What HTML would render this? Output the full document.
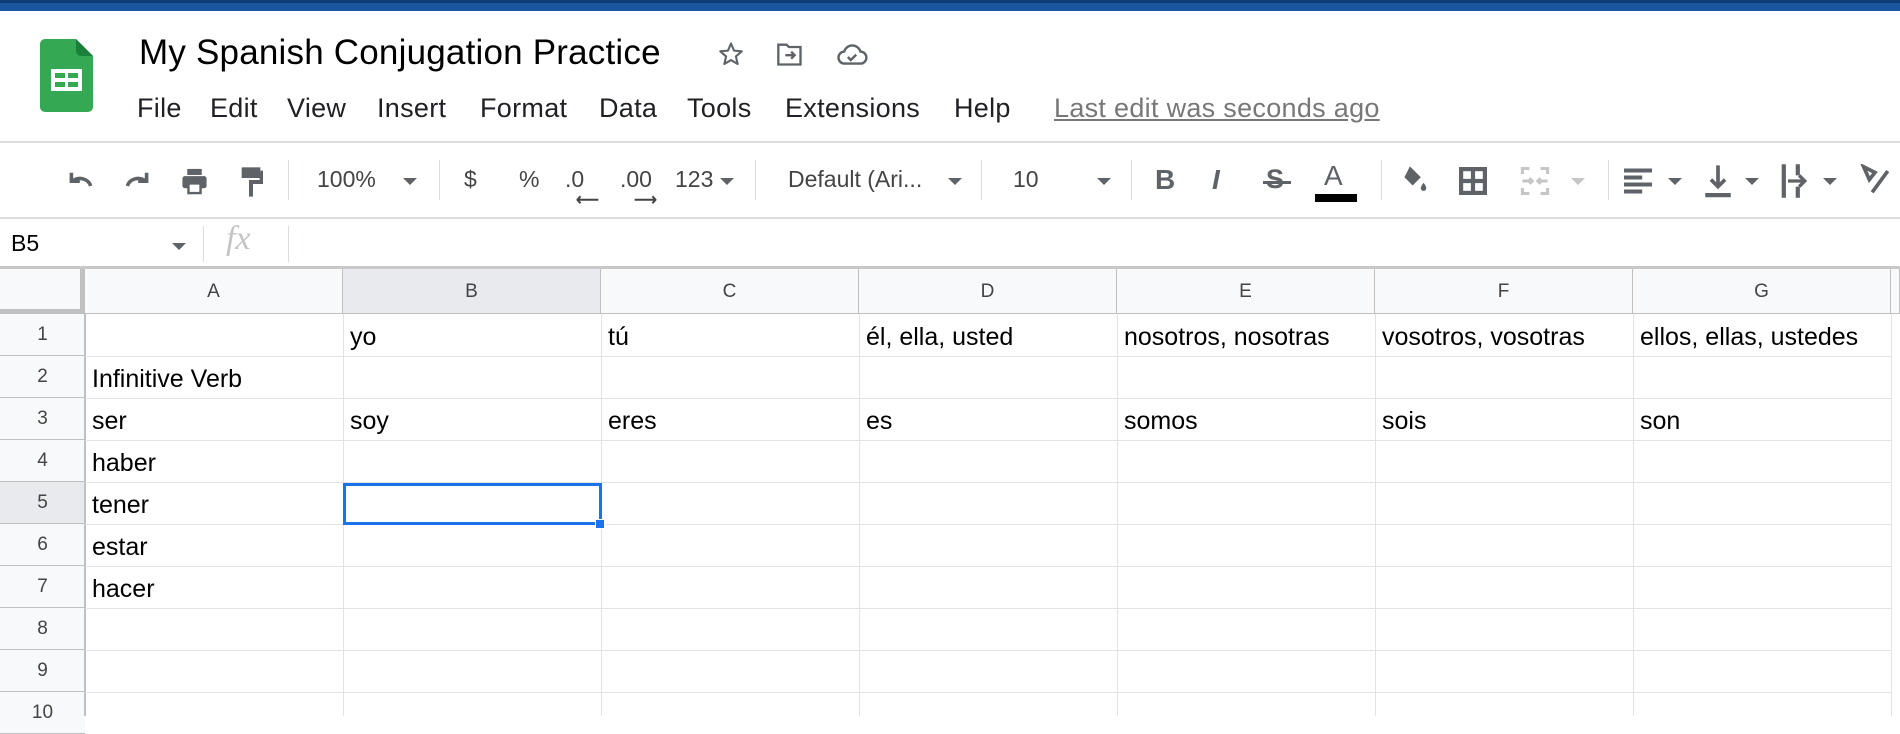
<!DOCTYPE html>
<html><head><meta charset="utf-8"><style>
*{margin:0;padding:0;box-sizing:border-box}
body{width:1900px;height:716px;overflow:hidden;background:#fff;font-family:"Liberation Sans",Arial,sans-serif;position:relative;color:#000}
.a{position:absolute;white-space:nowrap}
.menu{font-size:27px;letter-spacing:0.3px;color:#202124;top:93px}
.tb{font-size:23px;color:#444;top:166px}
.sep{position:absolute;width:1px;background:#dadce0;top:160px;height:40px}
.dd{position:absolute;width:0;height:0;border-left:7px solid transparent;border-right:7px solid transparent;border-top:7px solid #5f6368}
.ch{position:absolute;top:269px;height:45px;background:#f8f9fa;border-right:1px solid #c0c0c0;border-bottom:1px solid #c0c0c0;font-size:19px;color:#444;text-align:center;line-height:45px}
.rh{position:absolute;left:0;width:85px;height:42px;background:#f8f9fa;border-bottom:1px solid #c0c0c0;font-size:19px;color:#444;text-align:center;line-height:42px}
.vl{position:absolute;top:314px;width:1px;height:402px;background:#e2e3e3}
.hl{position:absolute;left:85px;width:1806px;height:1px;background:#e2e3e3}
.c{position:absolute;font-size:25px;line-height:42px;color:#000;white-space:nowrap}
</style></head><body>
<div class="a" style="left:0;top:0;width:1900px;height:3px;background:#0c3d75"></div>
<div class="a" style="left:0;top:3px;width:1900px;height:8px;background:#1a56a0"></div>
<svg class="a" style="left:40px;top:39px" width="53" height="73" viewBox="0 0 53 73">
<path d="M5 0H36L53 17V68a5 5 0 0 1-5 5H5a5 5 0 0 1-5-5V5a5 5 0 0 1 5-5z" fill="#34a853"/>
<path d="M36 0L53 17H41a5 5 0 0 1-5-5z" fill="#188038"/>
<rect x="11" y="30" width="31" height="22" fill="#fff"/>
<rect x="15" y="34" width="10" height="5" fill="#34a853"/><rect x="28" y="34" width="10" height="5" fill="#34a853"/>
<rect x="15" y="43" width="10" height="5" fill="#34a853"/><rect x="28" y="43" width="10" height="5" fill="#34a853"/>
</svg>
<div class="a" style="left:139px;top:33px;font-size:35px;letter-spacing:0.2px;color:#000">My Spanish Conjugation Practice</div>
<svg class="a" style="left:717px;top:40px" width="28" height="28" viewBox="0 0 24 24"><path d="M12 3l2.6 6.1 6.6.6-5 4.4 1.5 6.5L12 17.2 6.3 20.6l1.5-6.5-5-4.4 6.6-.6z" fill="none" stroke="#5f6368" stroke-width="1.8" stroke-linejoin="round"/></svg>
<svg class="a" style="left:776px;top:41px" width="28" height="26" viewBox="0 0 24 22"><path d="M2 3h7l2 2h10v15H2z" fill="none" stroke="#5f6368" stroke-width="2"/><path d="M8 12h8M13 9l3 3-3 3" fill="none" stroke="#5f6368" stroke-width="2"/></svg>
<svg class="a" style="left:836px;top:42px" width="32" height="24" viewBox="0 0 26 20"><path d="M7 18a5 5 0 0 1-.5-10A7 7 0 0 1 20 8a4.5 4.5 0 0 1 0 10z" fill="none" stroke="#5f6368" stroke-width="2"/><path d="M9.5 12.5l2.5 2.5 4.5-4.5" fill="none" stroke="#5f6368" stroke-width="2"/></svg>
<div class="a menu" style="left:137px">File</div>
<div class="a menu" style="left:210px">Edit</div>
<div class="a menu" style="left:287px">View</div>
<div class="a menu" style="left:377px">Insert</div>
<div class="a menu" style="left:480px">Format</div>
<div class="a menu" style="left:599px">Data</div>
<div class="a menu" style="left:687px">Tools</div>
<div class="a menu" style="left:785px">Extensions</div>
<div class="a menu" style="left:954px">Help</div>
<div class="a menu" style="left:1054px;color:#777;text-decoration:underline">Last edit was seconds ago</div>
<div class="a" style="left:0;top:141px;width:1900px;height:2px;background:#dadce0"></div>
<!-- toolbar -->
<svg class="a" style="left:66px;top:168px" width="30" height="24" viewBox="0 0 24 20"><path d="M4 4v7h7" fill="none" stroke="#5f6368" stroke-width="3"/><path d="M5 11a9 8 0 0 1 15 4" fill="none" stroke="#5f6368" stroke-width="3"/></svg>
<svg class="a" style="left:122px;top:168px" width="30" height="24" viewBox="0 0 24 20"><path d="M20 4v7h-7" fill="none" stroke="#5f6368" stroke-width="3"/><path d="M19 11a9 8 0 0 0-15 4" fill="none" stroke="#5f6368" stroke-width="3"/></svg>
<svg class="a" style="left:180px;top:166px" width="29" height="30" viewBox="0 0 24 24"><rect x="6" y="2" width="12" height="5" fill="#5f6368"/><rect x="2" y="8" width="20" height="10" rx="2" fill="#5f6368"/><rect x="7" y="14" width="10" height="8" fill="#fff" stroke="#5f6368" stroke-width="2"/></svg>
<svg class="a" style="left:239px;top:166px" width="24" height="32" viewBox="0 0 18 24"><rect x="2" y="1" width="14" height="8" fill="#5f6368"/><path d="M16 5h1v7H9v11" fill="none" stroke="#5f6368" stroke-width="3"/></svg>
<div class="sep" style="left:288px"></div>
<div class="a tb" style="left:317px">100%</div><div class="dd" style="left:403px;top:178px"></div>
<div class="sep" style="left:439px"></div>
<div class="a tb" style="left:464px">$</div>
<div class="a tb" style="left:519px">%</div>
<div class="a tb" style="left:565px">.0</div>
<div class="a" style="left:576px;top:190px;font-size:16px;color:#444;font-weight:bold">⟵</div>
<div class="a tb" style="left:620px">.00</div>
<div class="a" style="left:634px;top:190px;font-size:16px;color:#444;font-weight:bold">⟶</div>
<div class="a tb" style="left:675px">123</div><div class="dd" style="left:720px;top:178px"></div>
<div class="sep" style="left:755px"></div>
<div class="a tb" style="left:788px">Default (Ari...</div><div class="dd" style="left:948px;top:178px"></div>
<div class="sep" style="left:981px"></div>
<div class="a tb" style="left:1013px">10</div><div class="dd" style="left:1097px;top:178px"></div>
<div class="sep" style="left:1131px"></div>
<div class="a" style="left:1155px;top:164px;font-size:28px;font-weight:bold;color:#5f6368">B</div>
<div class="a" style="left:1212px;top:164px;font-size:28px;font-weight:bold;font-style:italic;color:#5f6368">I</div>
<div class="a" style="left:1266px;top:164px;font-size:27px;font-weight:bold;color:#5f6368">S</div>
<div class="a" style="left:1263px;top:181px;width:28px;height:3px;background:#5f6368"></div>
<div class="a" style="left:1324px;top:160px;font-size:28px;color:#5f6368">A</div>
<div class="a" style="left:1315px;top:194px;width:42px;height:8px;background:#000"></div>
<div class="sep" style="left:1381px"></div>
<svg class="a" style="left:1400px;top:165px" width="28" height="30" viewBox="0 0 20 22"><path d="M7 1l8 8-6 6-6-6z" fill="#5f6368"/><path d="M17 13c1.5 2 2 3 2 4a2 2 0 0 1-4 0c0-1 .5-2 2-4z" fill="#5f6368"/></svg>
<svg class="a" style="left:1459px;top:167px" width="28" height="28" viewBox="0 0 20 20"><rect x="1.5" y="1.5" width="17" height="17" fill="none" stroke="#5f6368" stroke-width="3"/><path d="M10 1v18M1 10h18" stroke="#5f6368" stroke-width="3"/></svg>
<svg class="a" style="left:1520px;top:167px" width="30" height="28" viewBox="0 0 20 20"><path d="M1 5V1h5M14 1h5v4M19 15v4h-5M6 19H1v-4M1 10h6M19 10h-6M6 8l2 2-2 2M14 8l-2 2 2 2" fill="none" stroke="#c6c6c6" stroke-width="2.2"/></svg>
<div class="dd" style="left:1571px;top:178px;border-top-color:#c6c6c6"></div>
<div class="sep" style="left:1608px"></div>
<svg class="a" style="left:1624px;top:168px" width="28" height="26" viewBox="0 0 20 18"><path d="M0 1.5h20M0 6.5h13M0 11.5h20M0 16.5h13" stroke="#5f6368" stroke-width="2.8"/></svg>
<div class="dd" style="left:1668px;top:178px"></div>
<svg class="a" style="left:1705px;top:164px" width="26" height="34" viewBox="0 0 18 24"><path d="M9 1v15M4 11l5 5 5-5" fill="none" stroke="#5f6368" stroke-width="2.6"/><path d="M0 22h18" stroke="#5f6368" stroke-width="3"/></svg>
<div class="dd" style="left:1745px;top:178px"></div>
<svg class="a" style="left:1781px;top:164px" width="28" height="34" viewBox="0 0 20 24"><path d="M2 0v24M12 0v8M12 16v8" stroke="#5f6368" stroke-width="3"/><path d="M5 12h12M13 8l4 4-4 4" fill="none" stroke="#5f6368" stroke-width="2.4"/></svg>
<div class="dd" style="left:1823px;top:178px"></div>
<svg class="a" style="left:1860px;top:164px" width="30" height="34" viewBox="0 0 20 24"><path d="M2 2l8 4-4 5zM8 20L19 5" fill="none" stroke="#5f6368" stroke-width="2.6"/></svg>
<div class="a" style="left:0;top:217px;width:1900px;height:2px;background:#dadce0"></div>
<!-- formula bar -->
<div class="a" style="left:11px;top:230px;font-size:23px;color:#000">B5</div>
<div class="dd" style="left:172px;top:243px"></div>
<div class="a" style="left:203px;top:226px;width:1px;height:36px;background:#dadce0"></div>
<div class="a" style="left:226px;top:220px;font-size:34px;font-style:italic;color:#c4c4c4;font-family:'Liberation Serif',serif">fx</div>
<div class="a" style="left:288px;top:226px;width:1px;height:36px;background:#dadce0"></div>
<div class="a" style="left:0;top:266px;width:1900px;height:3px;background:#c8c8c8"></div>
<!-- grid -->
<div class="a" style="left:0;top:269px;width:85px;height:45px;background:#f8f9fa;border-right:5px solid #c0c0c0;border-bottom:5px solid #c0c0c0"></div>
<div class="ch" style="left:85px;width:258px">A</div>
<div class="ch" style="left:343px;width:258px;background:#e8eaed">B</div>
<div class="ch" style="left:601px;width:258px">C</div>
<div class="ch" style="left:859px;width:258px">D</div>
<div class="ch" style="left:1117px;width:258px">E</div>
<div class="ch" style="left:1375px;width:258px">F</div>
<div class="ch" style="left:1633px;width:258px">G</div>
<div class="ch" style="left:1891px;width:9px"></div>
<div class="rh" style="top:314px">1</div>
<div class="rh" style="top:356px">2</div>
<div class="rh" style="top:398px">3</div>
<div class="rh" style="top:440px">4</div>
<div class="rh" style="top:482px;background:#e8eaed">5</div>
<div class="rh" style="top:524px">6</div>
<div class="rh" style="top:566px">7</div>
<div class="rh" style="top:608px">8</div>
<div class="rh" style="top:650px">9</div>
<div class="rh" style="top:692px">10</div>
<div class="a" style="left:84px;top:314px;width:2px;height:402px;background:#c0c0c0"></div>
<div class="vl" style="left:343px"></div><div class="vl" style="left:601px"></div><div class="vl" style="left:859px"></div><div class="vl" style="left:1117px"></div><div class="vl" style="left:1375px"></div><div class="vl" style="left:1633px"></div><div class="vl" style="left:1891px"></div>
<div class="hl" style="top:356px"></div><div class="hl" style="top:398px"></div><div class="hl" style="top:440px"></div><div class="hl" style="top:482px"></div><div class="hl" style="top:524px"></div><div class="hl" style="top:566px"></div><div class="hl" style="top:608px"></div><div class="hl" style="top:650px"></div><div class="hl" style="top:692px"></div>
<div class="c" style="left:350px;top:316px">yo</div>
<div class="c" style="left:608px;top:316px">tú</div>
<div class="c" style="left:866px;top:316px">él, ella, usted</div>
<div class="c" style="left:1124px;top:316px">nosotros, nosotras</div>
<div class="c" style="left:1382px;top:316px">vosotros, vosotras</div>
<div class="c" style="left:1640px;top:316px">ellos, ellas, ustedes</div>
<div class="c" style="left:92px;top:358px">Infinitive Verb</div>
<div class="c" style="left:92px;top:400px">ser</div>
<div class="c" style="left:350px;top:400px">soy</div>
<div class="c" style="left:608px;top:400px">eres</div>
<div class="c" style="left:866px;top:400px">es</div>
<div class="c" style="left:1124px;top:400px">somos</div>
<div class="c" style="left:1382px;top:400px">sois</div>
<div class="c" style="left:1640px;top:400px">son</div>
<div class="c" style="left:92px;top:442px">haber</div>
<div class="c" style="left:92px;top:484px">tener</div>
<div class="c" style="left:92px;top:526px">estar</div>
<div class="c" style="left:92px;top:568px">hacer</div>
<div class="a" style="left:343px;top:483px;width:259px;height:42px;border:3px solid #1a73e8"></div>
<div class="a" style="left:595px;top:519px;width:10px;height:10px;background:#1a73e8;border:1px solid #fff"></div>
</body></html>
